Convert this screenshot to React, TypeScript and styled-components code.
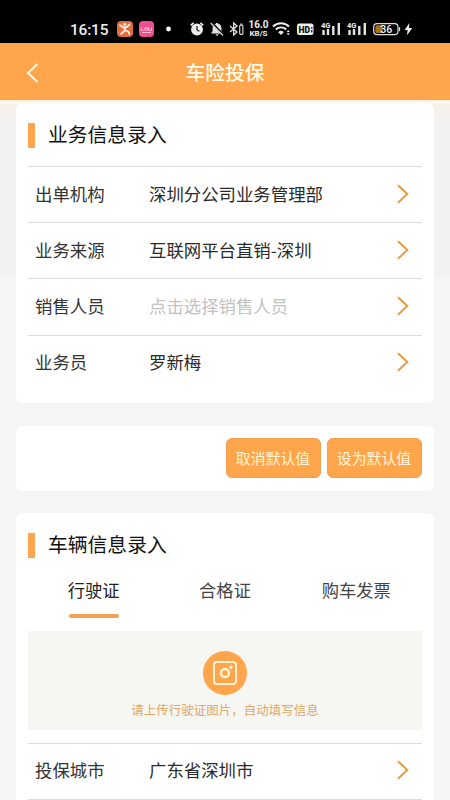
import React from "react";
import styled, { createGlobalStyle } from "styled-components";

const ORANGE = "#ffa54b";

const GlobalStyle = createGlobalStyle`
  *, *::before, *::after { box-sizing: border-box; }
  body {
    margin: 0;
    background: #f5f5f5;
    font-family: "Noto Sans CJK SC", "Noto Sans", sans-serif;
  }
  button { font-family: inherit; }
`;

const Screen = styled.div`
  width: 450px;
  height: 800px;
  overflow: hidden;
  display: flex;
  flex-direction: column;
  background: #f5f5f5;
`;

const StatusBar = styled.header`
  height: 43px;
  flex: none;
  display: flex;
  align-items: center;
  padding: 15px 0 0 70px;
  background: #000;
  color: #eee;
`;

const Clock = styled.span`
  width: 38px;
  padding-top: 1px;
  font: 500 15.5px/20px Roboto, sans-serif;
  letter-spacing: -0.2px;
  white-space: nowrap;
`;

const Glyph = styled.svg<{ $gap: number }>`
  display: block;
  flex: none;
  margin-left: ${(p) => p.$gap}px;
`;

const NetSpeed = styled.div`
  width: 21px;
  margin-left: 4px;
  display: flex;
  flex-direction: column;
  align-items: center;
  font: 700 8.5px/9px Roboto, sans-serif;
  white-space: nowrap;
`;

const SpeedValue = styled.span`
  font-size: 10px;
`;

const SpeedUnit = styled.span`
  font-size: 8px;
`;

const Navbar = styled.nav`
  height: 57px;
  flex: none;
  display: grid;
  grid-template-columns: 65px 1fr 65px;
  align-items: center;
  background: ${ORANGE};
  color: #fffbe6;
`;

const BackButton = styled.button`
  height: 40px;
  padding: 3px 0 0 26px;
  display: flex;
  align-items: center;
  border: 0;
  background: none;
  color: inherit;
`;

const PageTitle = styled.h1`
  margin: 0;
  text-align: center;
  font-size: 19.8px;
  line-height: 28px;
  font-weight: 500;
`;

const Content = styled.main`
  flex: 1;
  min-height: 0;
  padding: 3px 16px 0;
  display: flex;
  flex-direction: column;
  background:
    linear-gradient(#fff0e0, #fff8f2 3px, #faf0e9 4px, #f3f2f2 17px, transparent 17px) no-repeat 0 0 / 100% 17px,
    linear-gradient(#f2f2f2, #f2f2f2) no-repeat 0 0 / 100% 177px,
    #f5f5f5;
`;

const Card = styled.section<{ $height: number; $gap?: number }>`
  flex: none;
  height: ${(p) => p.$height}px;
  margin-top: ${(p) => p.$gap ?? 0}px;
  padding: 0 12px;
  border-radius: 7px;
  background: #fff;
`;

const SectionHead = styled.div<{ $height: number; $below?: number }>`
  height: ${(p) => p.$height}px;
  margin-bottom: ${(p) => p.$below ?? 0}px;
  display: flex;
  align-items: center;
  gap: 13px;
`;

const Marker = styled.span`
  width: 7px;
  height: 25px;
  margin-top: 3px;
  background: ${ORANGE};
`;

const SectionTitle = styled.h2`
  margin: 0;
  font-size: 19.8px;
  line-height: 28px;
  font-weight: 400;
  color: #111;
`;

const Row = styled.div`
  height: 56.2px;
  padding: 0 13px 1.5px 7px;
  display: grid;
  grid-template-columns: 114px 1fr auto;
  align-items: center;
  border-top: 1px solid #dcdcdc;
  font-size: 17.4px;
  line-height: 26px;
  color: #333;
`;

const Value = styled.span<{ $placeholder?: boolean }>`
  color: ${(p) => (p.$placeholder ? "#c2c2c2" : "#2a2a2a")};
`;

const Actions = styled.div`
  height: 100%;
  display: flex;
  align-items: center;
  justify-content: flex-end;
  gap: 6px;
  padding: 0 0.5px 1px 0;
`;

const ActionButton = styled.button`
  width: 95px;
  height: 40px;
  padding: 0 0 1px;
  border: 1px solid #f3a052;
  border-radius: 6px;
  background: ${ORANGE};
  color: #fff6d8;
  font-size: 14.9px;
`;

const Tabs = styled.div`
  height: 57px;
  display: grid;
  grid-template-columns: repeat(3, 1fr);
`;

const Tab = styled.div<{ $active?: boolean }>`
  display: flex;
  flex-direction: column;
  align-items: center;
  padding-top: 3px;
  font-size: 17.3px;
  line-height: 26px;
  color: ${(p) => (p.$active ? "#222" : "#444")};

  &::after {
    content: "";
    width: 50px;
    height: 4px;
    margin-top: 11px;
    border-radius: 2px;
    background: ${(p) => (p.$active ? "#f2a154" : "transparent")};
  }
`;

const Upload = styled.div`
  height: 98.5px;
  margin-bottom: 13px;
  padding-top: 20px;
  display: flex;
  flex-direction: column;
  align-items: center;
  gap: 5px;
  background: #f6f6f2;
  color: #e2a968;
  font-size: 12.5px;
  line-height: 20px;
`;

const CameraBadge = styled.span`
  width: 44px;
  height: 44px;
  display: flex;
  align-items: center;
  justify-content: center;
  border-radius: 50%;
  background: ${ORANGE};
`;

const Chevron = () => (
  <svg width="12" height="20" viewBox="0 0 12 20" fill="none" stroke="#e89c46" strokeWidth="2">
    <path d="M1 1.2 10.3 10 1 18.8" />
  </svg>
);

const SignalIcon = ({ gap }: { gap: number }) => (
  <Glyph $gap={gap} width="20" height="16" viewBox="0 0 20 16">
    <text x="0" y="6.8" fill="#eee" fontFamily="Roboto, sans-serif" fontSize="7.5" fontWeight="700">
      4G
    </text>
    <path d="M2.5 9v5M7 8v6M12.3 5v9M17.8 2v12" stroke="#e4e4e4" strokeWidth="2.4" />
  </Glyph>
);

const StatusIcons = () => (
  <>
    <Glyph $gap={9} width="16" height="16" viewBox="0 0 16 16">
      <rect width="16" height="16" rx="4" fill="#df6c3c" />
      <path
        d="M3 4.2 6.5 6.5 10 6l2.5-2.6M7.8 6.5 8 9.3 4 13M8 9.2l3.6 1.6.8 2.2"
        fill="none"
        stroke="#fff2df"
        strokeWidth="1.8"
        strokeLinecap="round"
        strokeLinejoin="round"
      />
      <circle cx="7.7" cy="3.3" r="1.5" fill="#fff2df" />
    </Glyph>
    <Glyph $gap={6} width="15" height="16" viewBox="0 0 15 16">
      <rect width="15" height="16" rx="4" fill="#ed4f91" />
      <path
        d="M2.2 6v3.3h2.5M6 9.5V6.7h2v2.8M9.5 6v3.3H12M12.5 9.5V6.7M3 11.5h9"
        fill="none"
        stroke="#ffb9d5"
        strokeWidth="1.1"
      />
    </Glyph>
    <Glyph $gap={12} width="5" height="16" viewBox="0 0 5 16">
      <circle cx="2.5" cy="8" r="2.4" fill="#fff" />
    </Glyph>
    <Glyph $gap={19} width="14" height="16" viewBox="0 0 14 16">
      <circle cx="7" cy="8.5" r="5.9" fill="#eee" />
      <path d="M.8 4.3 3.6 1.8M13.2 4.3 10.4 1.8" stroke="#eee" strokeWidth="1.8" />
      <path d="M7 5v4l2.4 1.3" fill="none" stroke="#111" strokeWidth="1.2" />
    </Glyph>
    <Glyph $gap={6} width="14" height="16" viewBox="0 0 14 16">
      <path d="M1 12.4 2.6 10V7a4.4 4.4 0 0 1 3.3-4.3V2h2.2v.7A4.4 4.4 0 0 1 11.4 7v3l1.6 2.4z" fill="#e2e2e2" />
      <path d="M5.3 13.2h3.4L7 15z" fill="#e2e2e2" />
      <path d="m1.5 1.5 12 12.5" stroke="#000" strokeWidth="2.2" />
      <path d="m.7 2 12.3 12.5" stroke="#e2e2e2" strokeWidth="1.1" />
    </Glyph>
    <Glyph $gap={5} width="15" height="16" viewBox="0 0 15 16" fill="none" stroke="#e2e2e2" strokeWidth="1.3">
      <path d="m1 5 7 6-3.3 3V2L8 5 1 11" />
      <rect x="10.7" y="4.2" width="3.2" height="9.2" rx=".8" strokeWidth="1.1" />
      <path d="M11.3 3.2h2" />
    </Glyph>
    <NetSpeed>
      <SpeedValue>16.0</SpeedValue>
      <SpeedUnit>KB/S</SpeedUnit>
    </NetSpeed>
    <Glyph $gap={3} width="20" height="16" viewBox="0 0 20 16" fill="none" stroke="#eee" strokeWidth="1.9">
      <path d="M1 5.5a11.5 11.5 0 0 1 16 0M3.7 8.5a7.7 7.7 0 0 1 10.6 0" />
      <path d="M6.2 11.2a4 4 0 0 1 5.6 0L9 14z" fill="#eee" stroke="none" />
      <path d="m14.6 11 1.6-2 1.6 2zM14.6 12.3l1.6 2 1.6-2z" fill="#eee" stroke="none" />
    </Glyph>
    <Glyph $gap={5} width="17" height="16" viewBox="0 0 17 16">
      <rect y="2.5" width="16.5" height="11.5" rx="2.2" fill="#eee" />
      <text x="1.5" y="11.5" fill="#111" fontFamily="Roboto, sans-serif" fontSize="8.5" fontWeight="900">
        HD
      </text>
      <path d="M14.8 6v1.7M14.8 9v2.5" stroke="#111" strokeWidth="1.2" />
    </Glyph>
    <SignalIcon gap={7} />
    <SignalIcon gap={6} />
    <Glyph $gap={6} width="28" height="16" viewBox="0 0 28 16">
      <rect x=".7" y="2.7" width="24.3" height="11" rx="3.4" fill="none" stroke="#ddd" strokeWidth="1.2" />
      <path d="M26.5 6.2v4" stroke="#ddd" strokeWidth="1.2" />
      <path d="M4 4.3h5.6v7.8H4A1.8 1.8 0 0 1 2.3 10V6A1.8 1.8 0 0 1 4 4.3z" fill="#a97412" />
      <text x="7.2" y="12" fill="#f3f3f3" fontFamily="Roboto, sans-serif" fontSize="10.5" fontWeight="500">
        36
      </text>
    </Glyph>
    <Glyph $gap={3} width="9" height="16" viewBox="0 0 9 16">
      <path d="M5.4 2 .6 9h3L3 14.2 8.4 7H5z" fill="#eee" />
    </Glyph>
  </>
);

type Field = { label: string; value: string; placeholder?: boolean };

const businessFields: Field[] = [
  { label: "出单机构", value: "深圳分公司业务管理部" },
  { label: "业务来源", value: "互联网平台直销-深圳" },
  { label: "销售人员", value: "点击选择销售人员", placeholder: true },
  { label: "业务员", value: "罗新梅" },
];

const FieldRow = ({ label, value, placeholder }: Field) => (
  <Row>
    <span>{label}</span>
    <Value $placeholder={placeholder}>{value}</Value>
    <Chevron />
  </Row>
);

export default function App() {
  return (
    <>
      <GlobalStyle />
      <Screen>
        <StatusBar>
          <Clock>16:15</Clock>
          <StatusIcons />
        </StatusBar>
        <Navbar>
          <BackButton aria-label="返回">
            <svg width="13" height="20" viewBox="0 0 13 20" fill="none" stroke="currentColor" strokeWidth="2">
              <path d="M11.5 1 2 10l9.5 9" />
            </svg>
          </BackButton>
          <PageTitle>车险投保</PageTitle>
        </Navbar>
        <Content>
          <Card $height={300}>
            <SectionHead $height={61} $below={2}>
              <Marker />
              <SectionTitle>业务信息录入</SectionTitle>
            </SectionHead>
            {businessFields.map((field) => (
              <FieldRow key={field.label} {...field} />
            ))}
          </Card>
          <Card $height={65} $gap={23}>
            <Actions>
              <ActionButton>取消默认值</ActionButton>
              <ActionButton>设为默认值</ActionButton>
            </Actions>
          </Card>
          <Card $height={320} $gap={22}>
            <SectionHead $height={61}>
              <Marker />
              <SectionTitle>车辆信息录入</SectionTitle>
            </SectionHead>
            <Tabs>
              <Tab $active>行驶证</Tab>
              <Tab>合格证</Tab>
              <Tab>购车发票</Tab>
            </Tabs>
            <Upload>
              <CameraBadge>
                <svg width="26" height="26" viewBox="0 0 26 26" fill="none" stroke="#fff4d6" strokeWidth="2">
                  <rect x="2" y="2" width="22" height="22" rx="3" />
                  <circle cx="13" cy="13" r="4" strokeWidth="2.4" />
                  <circle cx="19" cy="7.3" r="1.7" fill="#fff4d6" stroke="none" />
                </svg>
              </CameraBadge>
              <span>请上传行驶证图片，自动填写信息</span>
            </Upload>
            <FieldRow label="投保城市" value="广东省深圳市" />
            <Row />
          </Card>
        </Content>
      </Screen>
    </>
  );
}
